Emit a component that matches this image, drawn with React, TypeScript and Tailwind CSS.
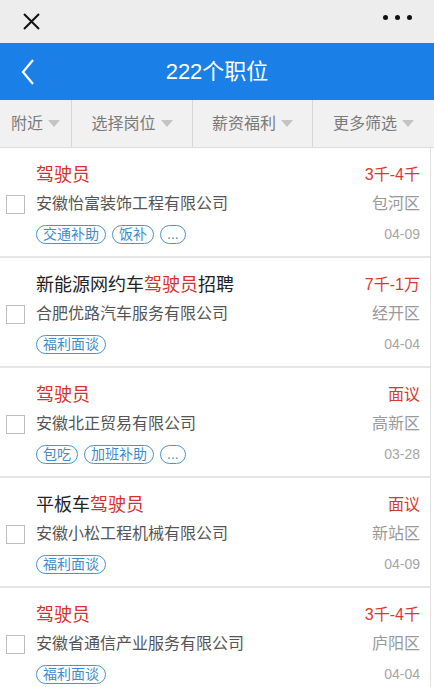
import React from "react";

type Job = {
  pre?: string;
  post?: string;
  salary: string;
  company: string;
  district: string;
  tags: string[];
  date: string;
};

const jobs: Job[] = [
  { salary: "3千-4千", company: "安徽怡富装饰工程有限公司", district: "包河区", tags: ["交通补助", "饭补", "..."], date: "04-09" },
  { pre: "新能源网约车", post: "招聘", salary: "7千-1万", company: "合肥优路汽车服务有限公司", district: "经开区", tags: ["福利面谈"], date: "04-04" },
  { salary: "面议", company: "安徽北正贸易有限公司", district: "高新区", tags: ["包吃", "加班补助", "..."], date: "03-28" },
  { pre: "平板车", salary: "面议", company: "安徽小松工程机械有限公司", district: "新站区", tags: ["福利面谈"], date: "04-09" },
  { salary: "3千-4千", company: "安徽省通信产业服务有限公司", district: "庐阳区", tags: ["福利面谈"], date: "04-04" },
];

const filters = ["附近", "选择岗位", "薪资福利", "更多筛选"];

const Caret = () => (
  <svg width="12" height="7" viewBox="0 0 12 7" className="ml-[5px]">
    <path d="M0 0 L12 0 L6 7 Z" fill="#c4c4c4" />
  </svg>
);

const JobRow = ({ job }: { job: Job }) => (
  <div className="h-[110px] border-b-2 border-[#e6e6e6] pt-[15px]">
    <div className="flex items-center justify-between h-[24px] pl-[36px] pr-[10px]">
      <div className="text-[18px] text-[#222]">
        {job.pre}
        <span className="text-[#d8302c]">驾驶员</span>
        {job.post}
      </div>
      <div className="text-[16px] text-[#d8392f]">{job.salary}</div>
    </div>
    <div className="flex items-center h-[24px] mt-[5px] pl-[6px] pr-[10px]">
      <div className="w-[19px] h-[19px] border border-[#bdbdbd] bg-white" />
      <div className="ml-[11px] flex-1 text-[16px] text-[#555]">{job.company}</div>
      <div className="text-[16px] text-[#9a9a9a]">{job.district}</div>
    </div>
    <div className="flex items-center h-[24px] mt-[6px] pl-[36px] pr-[10px]">
      <div className="flex flex-1 gap-[6px]">
        {job.tags.map((t, i) => (
          <span
            key={i}
            className="h-[19px] flex items-center rounded-full border border-[#4a93cf] px-[6px] text-[14px] leading-none text-[#3f8bc9]"
          >
            {t}
          </span>
        ))}
      </div>
      <div className="text-[14px] text-[#a5a5a5]">{job.date}</div>
    </div>
  </div>
);

export default function App() {
  return (
    <div
      className="w-[434px] h-[687px] overflow-hidden bg-white"
      style={{ fontFamily: '"Liberation Sans", "Noto Sans CJK SC", sans-serif' }}
    >
      <div className="h-[43px] bg-[#ededed] flex items-center justify-between pl-[22px] pr-[22px]">
        <svg width="19" height="19" viewBox="0 0 19 19">
          <path d="M2 2 L17 17 M17 2 L2 17" stroke="#111" strokeWidth="2" />
        </svg>
        <div className="flex gap-[7px] mt-[-9px]">
          <span className="w-[5px] h-[5px] rounded-full bg-[#111]" />
          <span className="w-[5px] h-[5px] rounded-full bg-[#111]" />
          <span className="w-[5px] h-[5px] rounded-full bg-[#111]" />
        </div>
      </div>
      <div className="h-[57px] bg-[#1a7fe7] relative flex items-center justify-center">
        <svg width="14" height="26" viewBox="0 0 14 26" className="absolute left-[21px] top-[16px]">
          <path d="M12 1 L2 13 L12 25" stroke="#fff" strokeWidth="2.2" fill="none" />
        </svg>
        <span className="text-[22px] text-white">222个职位</span>
      </div>
      <div className="h-[48px] bg-[#f1f1f1] border-b border-[#dcdcdc] grid grid-cols-[72px_121px_120px_1fr]">
        {filters.map((f, i) => (
          <div
            key={f}
            className={`flex items-center justify-center text-[16px] text-[#7a7a7a] ${i < 3 ? "border-r border-[#d6d6d6]" : ""}`}
          >
            {f}
            <Caret />
          </div>
        ))}
      </div>
      <div className="border-r border-[#e0e0e0] w-[431px]">
        {jobs.map((j, i) => (
          <JobRow key={i} job={j} />
        ))}
      </div>
    </div>
  );
}
